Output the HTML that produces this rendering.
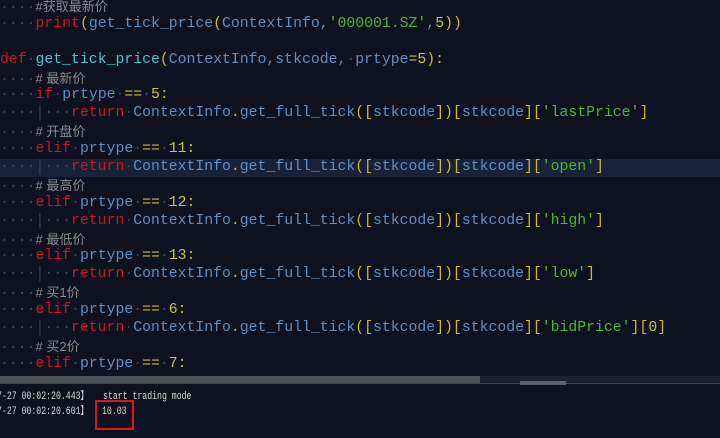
<html><head><style>
body{margin:0;width:720px;height:438px;background:#0e1220;overflow:hidden;position:relative;font-family:"Liberation Mono","Noto Sans CJK SC",monospace}
.code{position:absolute;left:0;top:-2px;width:720px;height:378px;overflow:hidden;font-size:14.8px;color:#5f8fc0}
.l{height:17.9px;line-height:17.9px;display:flex;align-items:baseline;overflow:hidden}
.l span,.l i{white-space:pre;font-style:normal}
.hl{background:#172238}
.k{color:#c8171e}.f{color:#4ec1cf}.p{color:#d4b62a}.s{color:#4fb62a}.n{color:#c9c92a}.c{color:#8a8a8a;font-family:"Liberation Sans","Noto Sans CJK SC",sans-serif;font-size:13px;line-height:17.9px}.d{color:#3e4455}
.sb{position:absolute;left:0;top:376px;width:720px;height:7px;background:#1e2230}
.sbt{position:absolute;left:0;top:376px;width:480px;height:7px;background:#4b4f5a}
.div{position:absolute;left:0;top:383px;width:720px;height:1px;background:#3a4660}
.tab{position:absolute;left:520px;top:381px;width:46px;height:4px;background:#5b6070}
.con{position:absolute;font-family:"Liberation Mono","Noto Sans CJK SC",monospace;font-size:8.2px;line-height:10px;height:10px;color:#d8d8d8;white-space:pre;transform:scaleY(1.3);transform-origin:0 0}
.box{position:absolute;left:95px;top:400px;width:35px;height:26px;border:2px solid #e0141a}
</style></head><body>
<div class="code"><div class="l"><span class="d">····</span><span class="c">#获取最新价</span></div><div class="l"><span class="d">····</span><span class="k">print</span><span class="p">(</span><i>get_tick_price</i><span class="p">(</span><i>ContextInfo,</i><span class="s">'000001.SZ'</span><i>,</i><span class="n">5</span><span class="p">))</span></div><div class="l"> </div><div class="l"><span class="k">def</span><span class="d">·</span><span class="f">get_tick_price</span><span class="p">(</span><i>ContextInfo,stkcode,</i><span class="d">·</span><i>prtype</i><span class="p">=</span><span class="n">5</span><span class="p">):</span></div><div class="l"><span class="d">····</span><span class="c"># 最新价</span></div><div class="l"><span class="d">····</span><span class="k">if</span><span class="d">·</span><i>prtype</i><span class="d">·</span><span class="p">==</span><span class="d">·</span><span class="n">5</span><span class="p">:</span></div><div class="l"><span class="d">····│···</span><span class="k">return</span><span class="d">·</span><i>ContextInfo</i><span class="p">.</span><i>get_full_tick</i><span class="p">([</span><i>stkcode</i><span class="p">])[</span><i>stkcode</i><span class="p">][</span><span class="s">'lastPrice'</span><span class="p">]</span></div><div class="l"><span class="d">····</span><span class="c"># 开盘价</span></div><div class="l"><span class="d">····</span><span class="k">elif</span><span class="d">·</span><i>prtype</i><span class="d">·</span><span class="p">==</span><span class="d">·</span><span class="n">11</span><span class="p">:</span></div><div class="l hl"><span class="d">····│···</span><span class="k">return</span><span class="d">·</span><i>ContextInfo</i><span class="p">.</span><i>get_full_tick</i><span class="p">([</span><i>stkcode</i><span class="p">])[</span><i>stkcode</i><span class="p">][</span><span class="s">'open'</span><span class="p">]</span></div><div class="l"><span class="d">····</span><span class="c"># 最高价</span></div><div class="l"><span class="d">····</span><span class="k">elif</span><span class="d">·</span><i>prtype</i><span class="d">·</span><span class="p">==</span><span class="d">·</span><span class="n">12</span><span class="p">:</span></div><div class="l"><span class="d">····│···</span><span class="k">return</span><span class="d">·</span><i>ContextInfo</i><span class="p">.</span><i>get_full_tick</i><span class="p">([</span><i>stkcode</i><span class="p">])[</span><i>stkcode</i><span class="p">][</span><span class="s">'high'</span><span class="p">]</span></div><div class="l"><span class="d">····</span><span class="c"># 最低价</span></div><div class="l"><span class="d">····</span><span class="k">elif</span><span class="d">·</span><i>prtype</i><span class="d">·</span><span class="p">==</span><span class="d">·</span><span class="n">13</span><span class="p">:</span></div><div class="l"><span class="d">····│···</span><span class="k">return</span><span class="d">·</span><i>ContextInfo</i><span class="p">.</span><i>get_full_tick</i><span class="p">([</span><i>stkcode</i><span class="p">])[</span><i>stkcode</i><span class="p">][</span><span class="s">'low'</span><span class="p">]</span></div><div class="l"><span class="d">····</span><span class="c"># 买1价</span></div><div class="l"><span class="d">····</span><span class="k">elif</span><span class="d">·</span><i>prtype</i><span class="d">·</span><span class="p">==</span><span class="d">·</span><span class="n">6</span><span class="p">:</span></div><div class="l"><span class="d">····│···</span><span class="k">return</span><span class="d">·</span><i>ContextInfo</i><span class="p">.</span><i>get_full_tick</i><span class="p">([</span><i>stkcode</i><span class="p">])[</span><i>stkcode</i><span class="p">][</span><span class="s">'bidPrice'</span><span class="p">][</span><span class="n">0</span><span class="p">]</span></div><div class="l"><span class="d">····</span><span class="c"># 买2价</span></div><div class="l"><span class="d">····</span><span class="k">elif</span><span class="d">·</span><i>prtype</i><span class="d">·</span><span class="p">==</span><span class="d">·</span><span class="n">7</span><span class="p">:</span></div></div>
<div class="sb"></div><div class="sbt"></div>
<div class="div"></div><div class="tab"></div>
<div class="con" style="top:391px;left:-3px">7-27 00:02:20.443】</div>
<div class="con" style="top:391px;left:103px">start trading mode</div>
<div class="con" style="top:406px;left:-3px">7-27 00:02:20.601】</div>
<div class="con" style="top:406px;left:102px">10.03</div>
<div class="box"></div>
</body></html>
